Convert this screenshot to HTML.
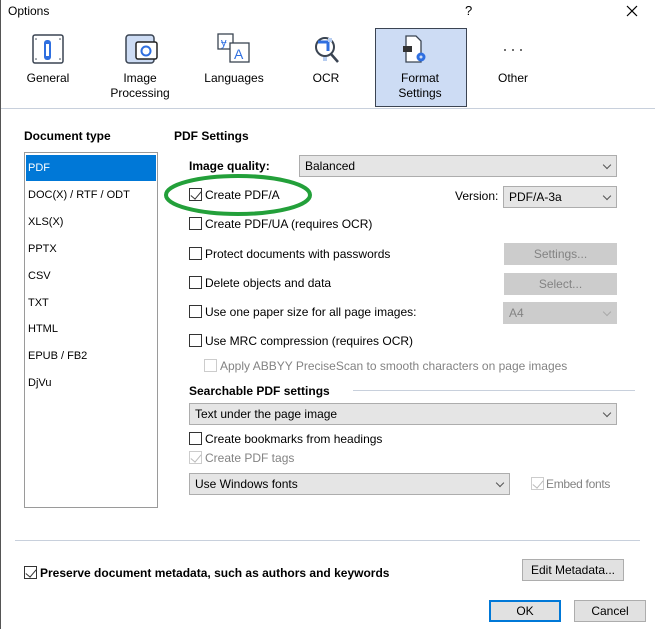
<!DOCTYPE html>
<html><head><style>
*{margin:0;padding:0;box-sizing:border-box}
body{width:655px;height:629px;background:#fff;font-family:"Liberation Sans",sans-serif;font-size:12px;color:#000;position:relative;overflow:hidden}
.a{position:absolute;white-space:nowrap}
.b{font-weight:bold}
.lbl{position:absolute;text-align:center;font-size:12px;line-height:15px}
.cb{position:absolute;width:13px;height:13px;border:1px solid #333;background:#fff}
.cb.d{border-color:#ccc}
.dd{position:absolute;height:22px;background:#e5e5e5;border:1px solid #adadad;padding:3px 5px;font-size:12px}
.dd.dis{background:#ccc;border-color:#ccc;color:#838383}
.dd:after{content:"";position:absolute;right:6px;top:6px;width:5px;height:5px;border-right:1px solid #555;border-bottom:1px solid #555;transform:rotate(45deg)}
.dd.dis:after{border-color:#aaa}
.btn{position:absolute;height:22px;background:#e1e1e1;border:1px solid #adadad;text-align:center;line-height:20px;font-size:12px}
.btn.dis{background:#ccc;border-color:#ccc;color:#838383}
.li{position:absolute;left:26px;width:130px;height:26px;line-height:26px;padding-left:2px;font-size:11px}
.chk:after{content:"";position:absolute;left:3px;top:0px;width:5px;height:9px;border-right:1.5px solid #333;border-bottom:1.5px solid #333;transform:rotate(40deg)}
.cb.d.chk:after{border-color:#bbb}
.g{color:#838383}
</style></head><body>
<div class="a" style="left:0;top:0;width:1px;height:629px;background:#555"></div>
<div class="a" style="left:8px;top:4px;font-size:12px">Options</div>
<div class="a" style="left:465px;top:3px;font-size:13px">?</div>
<svg class="a" style="left:626px;top:5px" width="12" height="12"><path d="M1 1L11 11M11 1L1 11" stroke="#000" stroke-width="1.2"/></svg>

<div class="a" style="left:375px;top:28px;width:92px;height:79px;background:#cddcf4;border:1px solid #3b4452"></div>
<svg class="a" style="left:20px;top:30px" width="640" height="40" viewBox="20 30 640 40">
<rect x="33" y="35" width="30" height="28" rx="2" fill="#fff" stroke="#3a4452" stroke-width="1.5"/>
<rect x="44" y="40" width="7" height="20" rx="3" fill="#2f6fe0"/>
<rect x="46" y="44" width="3" height="12" fill="#fff"/>
<circle cx="36" cy="39" r=".8" fill="#3a4452"/><circle cx="60" cy="39" r=".8" fill="#3a4452"/><circle cx="36" cy="59" r=".8" fill="#3a4452"/><circle cx="60" cy="59" r=".8" fill="#3a4452"/>
<rect x="126" y="35" width="28" height="28" rx="3" fill="#cddcf4" stroke="#3a4452" stroke-width="1.5"/>
<rect x="136" y="42" width="21" height="17" rx="2" fill="#fff" stroke="#222" stroke-width="1.5"/>
<circle cx="146" cy="51" r="4.5" fill="none" stroke="#2f6fe0" stroke-width="2"/>
<rect x="218" y="34" width="15" height="15" fill="#fff" stroke="#3a4452" stroke-width="1.3"/>
<text x="221" y="46" font-size="11" fill="#2f6fe0" font-family="Liberation Sans">ɏ</text>
<rect x="230" y="43" width="19" height="19" fill="#fff" stroke="#3a4452" stroke-width="1.3"/>
<text x="234" y="59" font-size="14" fill="#2f6fe0" font-family="Liberation Sans">A</text>
<circle cx="325" cy="47" r="9" fill="#fff" stroke="#3a4452" stroke-width="2"/>
<path d="M318 42h10v9" fill="none" stroke="#2f6fe0" stroke-width="3"/>
<path d="M331 54l7 8" stroke="#3a4452" stroke-width="2.5"/>
<rect x="328" y="38" width="4" height="4" fill="#b7cdf0"/><rect x="323" y="57" width="4" height="4" fill="#b7cdf0"/>
<path d="M406 36h10l5 5v21h-15z" fill="#fff" stroke="#3a4452" stroke-width="1.3"/>
<rect x="403" y="46" width="9" height="6" fill="#333"/>
<circle cx="421" cy="57" r="4.5" fill="#2f6fe0"/><circle cx="421" cy="57" r="1.5" fill="#cddcf4"/>
<circle cx="505" cy="50" r="1" fill="#444"/><circle cx="513" cy="50" r="1" fill="#444"/><circle cx="521" cy="50" r="1" fill="#444"/>
</svg>
<div class="lbl" style="left:8px;width:80px;top:71px">General</div>
<div class="lbl" style="left:100px;width:80px;top:71px">Image<br>Processing</div>
<div class="lbl" style="left:194px;width:80px;top:71px">Languages</div>
<div class="lbl" style="left:286px;width:80px;top:71px">OCR</div>
<div class="lbl" style="left:380px;width:80px;top:71px">Format<br>Settings</div>
<div class="lbl" style="left:473px;width:80px;top:71px">Other</div>
<div class="a" style="left:1px;top:108px;width:654px;height:1px;background:#c8d0dc"></div>

<div class="a b" style="left:24px;top:129px">Document type</div>
<div class="a" style="left:24px;top:152px;width:134px;height:356px;border:1px solid #9a9a9a"></div>
<div class="li" style="top:155px;background:#0078d7;color:#fff;width:130px">PDF</div>
<div class="li" style="top:182px">DOC(X) / RTF / ODT</div>
<div class="li" style="top:209px">XLS(X)</div>
<div class="li" style="top:236px">PPTX</div>
<div class="li" style="top:263px">CSV</div>
<div class="li" style="top:290px">TXT</div>
<div class="li" style="top:316px">HTML</div>
<div class="li" style="top:343px">EPUB / FB2</div>
<div class="li" style="top:370px">DjVu</div>

<div class="a b" style="left:174px;top:129px">PDF Settings</div>
<div class="a b" style="left:189px;top:159px">Image quality:</div>
<div class="dd" style="left:299px;top:155px;width:318px">Balanced</div>

<div class="cb chk" style="left:189px;top:188px"></div><div class="a" style="left:205px;top:188px">Create PDF/A</div>
<div class="a" style="left:455px;top:189px">Version:</div>
<div class="dd" style="left:503px;top:186px;width:114px">PDF/A-3a</div>
<div class="cb" style="left:189px;top:217px"></div><div class="a" style="left:205px;top:217px">Create PDF/UA (requires OCR)</div>
<div class="cb" style="left:189px;top:247px"></div><div class="a" style="left:205px;top:247px">Protect documents with passwords</div>
<div class="btn dis" style="left:504px;top:243px;width:113px">Settings...</div>
<div class="cb" style="left:189px;top:276px"></div><div class="a" style="left:205px;top:276px">Delete objects and data</div>
<div class="btn dis" style="left:504px;top:273px;width:113px">Select...</div>
<div class="cb" style="left:189px;top:305px"></div><div class="a" style="left:205px;top:305px">Use one paper size for all page images:</div>
<div class="dd dis" style="left:503px;top:302px;width:114px">A4</div>
<div class="cb" style="left:189px;top:334px"></div><div class="a" style="left:205px;top:334px">Use MRC compression (requires OCR)</div>
<div class="cb d" style="left:204px;top:359px"></div><div class="a g" style="left:220px;top:359px">Apply ABBYY PreciseScan to smooth characters on page images</div>

<div class="a b" style="left:189px;top:384px">Searchable PDF settings</div>
<div class="a" style="left:353px;top:390px;width:282px;height:1px;background:#c8d0dc"></div>
<div class="dd" style="left:189px;top:403px;width:428px">Text under the page image</div>
<div class="cb" style="left:189px;top:432px"></div><div class="a" style="left:205px;top:432px">Create bookmarks from headings</div>
<div class="cb d chk" style="left:189px;top:451px"></div><div class="a g" style="left:205px;top:451px">Create PDF tags</div>
<div class="dd" style="left:189px;top:473px;width:321px">Use Windows fonts</div>
<div class="cb d chk" style="left:531px;top:477px"></div><div class="a g" style="left:546px;top:477px;letter-spacing:-0.3px">Embed fonts</div>

<svg class="a" style="left:160px;top:170px" width="160" height="50"><ellipse cx="78" cy="25" rx="72" ry="19" fill="none" stroke="#23a03a" stroke-width="4"/></svg>

<div class="a" style="left:15px;top:540px;width:625px;height:1px;background:#c8d0dc"></div>
<div class="cb chk" style="left:24px;top:566px"></div>
<div class="a b" style="left:40px;top:566px">Preserve document metadata, such as authors and keywords</div>
<div class="btn" style="left:522px;top:559px;width:102px">Edit Metadata...</div>
<div class="btn" style="left:489px;top:600px;width:72px;border:2px solid #0078d7;line-height:18px">OK</div>
<div class="btn" style="left:574px;top:600px;width:72px">Cancel</div>
</body></html>
